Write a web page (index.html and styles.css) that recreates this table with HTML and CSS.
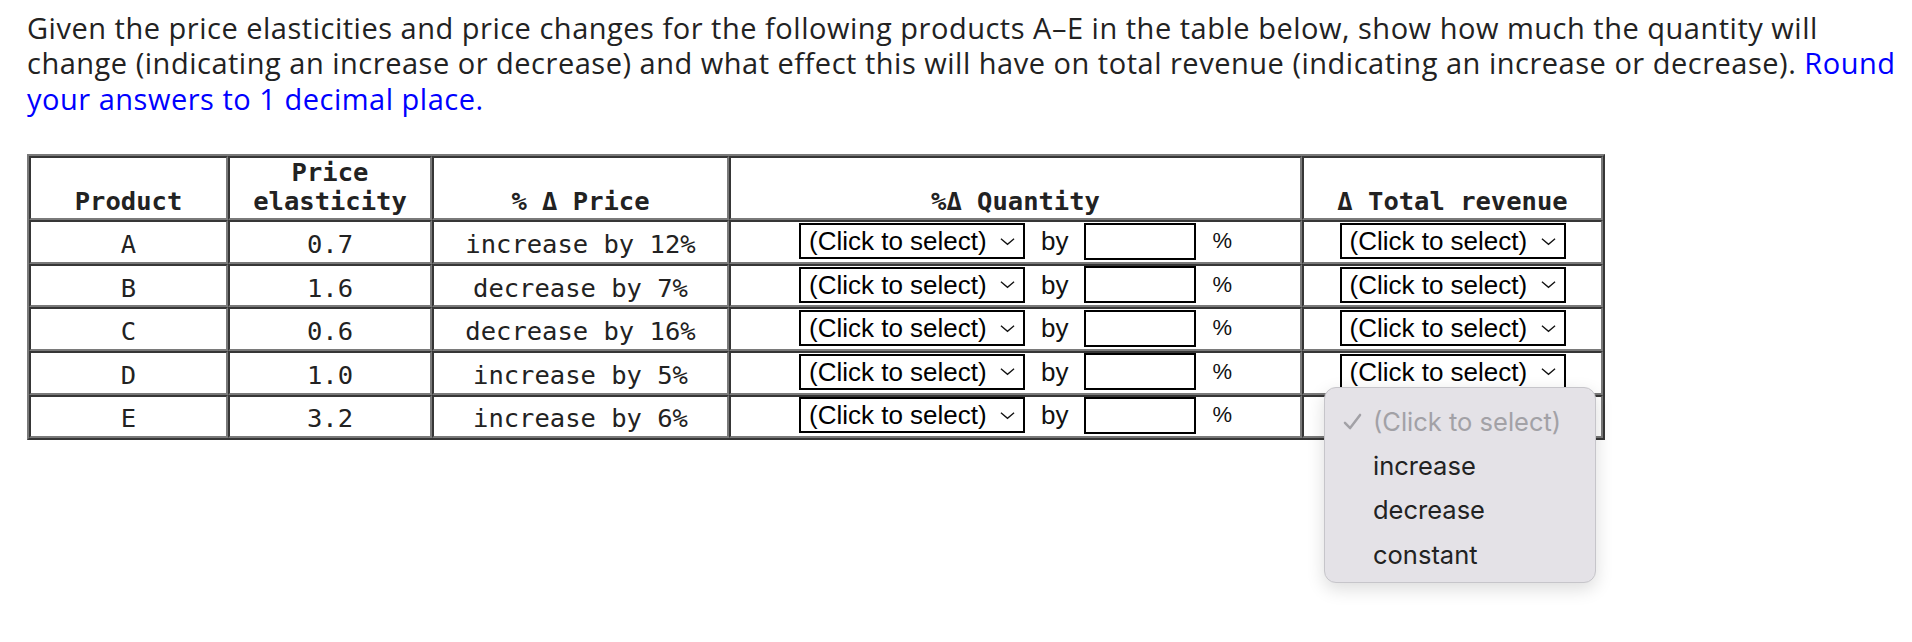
FILE: index.html
```html
<!DOCTYPE html>
<html>
<head>
<meta charset="utf-8">
<link rel="stylesheet" href="styles.css">
</head>
<body>
<div class="page">
  <p class="intro">Given the price elasticities and price changes for the following products A–E in the table below, show how much the quantity will<br>change (indicating an increase or decrease) and what effect this will have on total revenue (indicating an increase or decrease). <span class="hint">Round<br>your answers to 1 decimal place.</span></p>

  <table class="grid">
    <colgroup>
      <col class="c1"><col class="c2"><col class="c3"><col class="c4"><col class="c5">
    </colgroup>
    <thead>
      <tr class="head">
        <th>Product</th>
        <th>Price<br>elasticity</th>
        <th>% Δ Price</th>
        <th>%Δ Quantity</th>
        <th>Δ Total revenue</th>
      </tr>
    </thead>
    <tbody>
      <tr>
        <td class="txt">A</td><td class="txt">0.7</td><td class="txt">increase by 12%</td>
        <td class="ctl"><div class="box"><span class="sel">(Click to select)<svg class="chev" viewBox="0 0 16 9"><path d="M1 1.5 L8 7.5 L15 1.5"/></svg></span><span class="by">by</span><input class="num" type="text"><span class="pct">%</span></div></td>
        <td class="ctl"><div class="box"><span class="sel">(Click to select)<svg class="chev" viewBox="0 0 16 9"><path d="M1 1.5 L8 7.5 L15 1.5"/></svg></span></div></td>
      </tr>
      <tr>
        <td class="txt">B</td><td class="txt">1.6</td><td class="txt">decrease by 7%</td>
        <td class="ctl"><div class="box"><span class="sel">(Click to select)<svg class="chev" viewBox="0 0 16 9"><path d="M1 1.5 L8 7.5 L15 1.5"/></svg></span><span class="by">by</span><input class="num" type="text"><span class="pct">%</span></div></td>
        <td class="ctl"><div class="box"><span class="sel">(Click to select)<svg class="chev" viewBox="0 0 16 9"><path d="M1 1.5 L8 7.5 L15 1.5"/></svg></span></div></td>
      </tr>
      <tr>
        <td class="txt">C</td><td class="txt">0.6</td><td class="txt">decrease by 16%</td>
        <td class="ctl"><div class="box"><span class="sel">(Click to select)<svg class="chev" viewBox="0 0 16 9"><path d="M1 1.5 L8 7.5 L15 1.5"/></svg></span><span class="by">by</span><input class="num" type="text"><span class="pct">%</span></div></td>
        <td class="ctl"><div class="box"><span class="sel">(Click to select)<svg class="chev" viewBox="0 0 16 9"><path d="M1 1.5 L8 7.5 L15 1.5"/></svg></span></div></td>
      </tr>
      <tr>
        <td class="txt">D</td><td class="txt">1.0</td><td class="txt">increase by 5%</td>
        <td class="ctl"><div class="box"><span class="sel">(Click to select)<svg class="chev" viewBox="0 0 16 9"><path d="M1 1.5 L8 7.5 L15 1.5"/></svg></span><span class="by">by</span><input class="num" type="text"><span class="pct">%</span></div></td>
        <td class="ctl"><div class="box"><span class="sel">(Click to select)<svg class="chev" viewBox="0 0 16 9"><path d="M1 1.5 L8 7.5 L15 1.5"/></svg></span></div></td>
      </tr>
      <tr>
        <td class="txt">E</td><td class="txt">3.2</td><td class="txt">increase by 6%</td>
        <td class="ctl"><div class="box"><span class="sel">(Click to select)<svg class="chev" viewBox="0 0 16 9"><path d="M1 1.5 L8 7.5 L15 1.5"/></svg></span><span class="by">by</span><input class="num" type="text"><span class="pct">%</span></div></td>
        <td class="ctl"><div class="box"><span class="sel">(Click to select)<svg class="chev" viewBox="0 0 16 9"><path d="M1 1.5 L8 7.5 L15 1.5"/></svg></span></div></td>
      </tr>
    </tbody>
  </table>

  <ul class="menu">
    <li class="opt current"><svg class="check" viewBox="0 0 20 18"><path d="M2 10.5 L7.5 16 L18 2"/></svg>(Click to select)</li>
    <li class="opt">increase</li>
    <li class="opt">decrease</li>
    <li class="opt">constant</li>
  </ul>
</div>
</body>
</html>
```

FILE: styles.css
```css
html, body {
  margin: 0;
  padding: 0;
  background: #ffffff;
}

.page {
  position: relative;
  box-sizing: border-box;
  min-height: 642px;
  padding: 10px 0 0 27px;
}

.intro {
  margin: 0;
  font-family: "Open Sans", "Liberation Sans", sans-serif;
  font-size: 29px;
  letter-spacing: 0.51px;
  line-height: 35.4px;
  white-space: nowrap;
  color: #222222;
}

.hint {
  color: #0000ff;
}

.grid {
  margin-top: 38px;
  width: 1578px;
  table-layout: fixed;
  border-collapse: separate;
  border-spacing: 0;
  border-style: solid;
  border-width: 2px;
  border-color: #7a7a7a #363636 #363636 #7a7a7a;
  font-family: "DejaVu Sans Mono", "Liberation Mono", monospace;
  font-size: 25.5px;
  color: #222;
}

.c1 { width: 199px; }
.c2 { width: 204px; }
.c3 { width: 297px; }
.c4 { width: 573px; }
.c5 { width: 301px; }

.grid tr {
  height: 43.6px;
}

.grid tr.head {
  height: 64px;
}

.grid th,
.grid td {
  border-style: solid;
  border-width: 2px;
  border-color: #363636 #7a7a7a #7a7a7a #363636;
  padding: 0;
  text-align: center;
}

.grid th {
  vertical-align: bottom;
  font-weight: bold;
  line-height: 29px;
  padding-bottom: 2px;
}

.grid td {
  vertical-align: middle;
}

.grid td.txt {
  padding-top: 4px;
  line-height: 30px;
}

.grid td.ctl {
  padding-bottom: 2px;
}

.box {
  display: flex;
  justify-content: center;
  align-items: center;
  gap: 16px;
}

.sel {
  display: flex;
  align-items: center;
  justify-content: space-between;
  box-sizing: border-box;
  width: 226px;
  height: 36px;
  border: 2px solid #000;
  padding: 0 8px 0 8px;
  font-family: "Liberation Sans", Arial, sans-serif;
  font-size: 26px;
  line-height: 30px;
  color: #000;
  background: #fff;
}

.chev {
  width: 15px;
  height: 9px;
  fill: none;
  stroke: #111;
  stroke-width: 1.4;
}

.by {
  font-family: "Liberation Sans", Arial, sans-serif;
  font-size: 26px;
  line-height: 30px;
  color: #111;
}

.num {
  box-sizing: border-box;
  width: 112px;
  height: 37px;
  border: 2px solid #000;
  border-radius: 0;
  padding: 0;
  margin: 0;
  background: #fff;
}

.pct {
  font-family: "Liberation Sans", Arial, sans-serif;
  font-size: 22px;
  line-height: 30px;
  color: #111;
}

.menu {
  position: absolute;
  left: 1324px;
  top: 387px;
  z-index: 2;
  width: 272px;
  height: 196px;
  box-sizing: border-box;
  margin: 0;
  padding: 11px 0 0 0;
  list-style: none;
  background: #e4e2e7;
  border: 1px solid #c6c5ca;
  border-radius: 12px;
  box-shadow: 0 6px 18px rgba(0, 0, 0, 0.14);
  font-family: Inter, "Liberation Sans", sans-serif;
  font-size: 25.5px;
  color: #222;
}

.opt {
  display: flex;
  align-items: center;
  height: 44.3px;
  padding-left: 48px;
  position: relative;
}

.opt.current {
  color: #a2a1a6;
}

.check {
  position: absolute;
  left: 18px;
  top: 14px;
  width: 19px;
  height: 17px;
  fill: none;
  stroke: #a2a1a6;
  stroke-width: 2.6;
  stroke-linecap: round;
  stroke-linejoin: round;
}
```
